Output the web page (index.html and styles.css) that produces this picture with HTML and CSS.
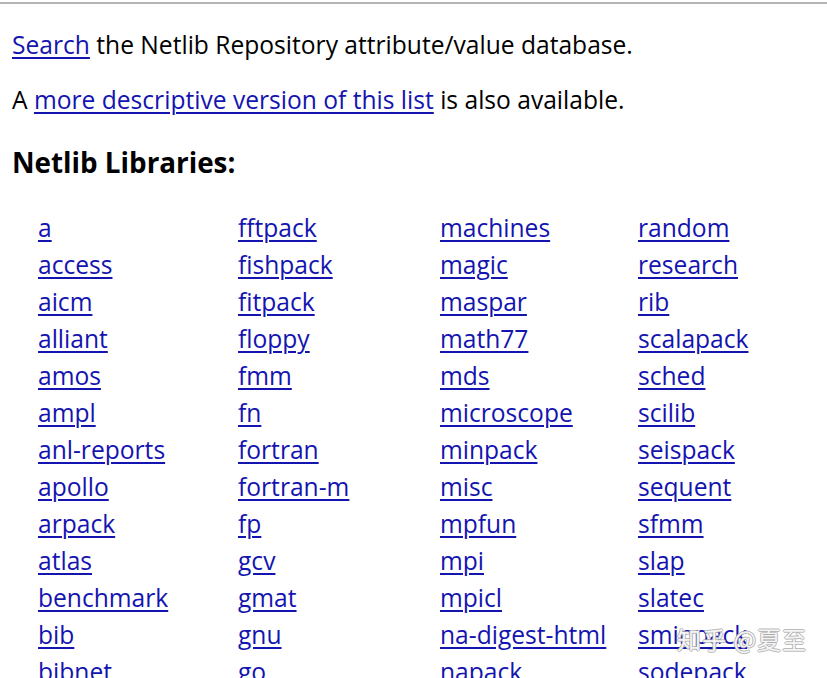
FILE: index.html
```html
<!DOCTYPE html>
<html>
<head>
<meta charset="utf-8">
<link rel="stylesheet" href="styles.css">
</head>
<body>
<div class="rule"></div>
<p class="line first"><a href="#">Search</a> the Netlib Repository attribute/value database.</p>
<p class="line second">A <a href="#">more descriptive version of this list</a> is also available.</p>
<h3 class="title">Netlib Libraries:</h3>
<div class="libs">
<a href="#">a</a><a href="#">fftpack</a><a href="#">machines</a><a href="#">random</a>
<a href="#">access</a><a href="#">fishpack</a><a href="#">magic</a><a href="#">research</a>
<a href="#">aicm</a><a href="#">fitpack</a><a href="#">maspar</a><a href="#">rib</a>
<a href="#">alliant</a><a href="#">floppy</a><a href="#">math77</a><a href="#">scalapack</a>
<a href="#">amos</a><a href="#">fmm</a><a href="#">mds</a><a href="#">sched</a>
<a href="#">ampl</a><a href="#">fn</a><a href="#">microscope</a><a href="#">scilib</a>
<a href="#">anl-reports</a><a href="#">fortran</a><a href="#">minpack</a><a href="#">seispack</a>
<a href="#">apollo</a><a href="#">fortran-m</a><a href="#">misc</a><a href="#">sequent</a>
<a href="#">arpack</a><a href="#">fp</a><a href="#">mpfun</a><a href="#">sfmm</a>
<a href="#">atlas</a><a href="#">gcv</a><a href="#">mpi</a><a href="#">slap</a>
<a href="#">benchmark</a><a href="#">gmat</a><a href="#">mpicl</a><a href="#">slatec</a>
<a href="#">bib</a><a href="#">gnu</a><a href="#">na-digest-html</a><a href="#">sminpack</a>
<a href="#">bibnet</a><a href="#">go</a><a href="#">napack</a><a href="#">sodepack</a>
</div>
<div class="watermark">知乎 @夏至</div>
</body>
</html>
```
FILE: styles.css
```css
html, body {
  margin: 0;
  padding: 0;
  background: #ffffff;
  overflow: hidden;
}
body {
  padding: 0 12px;
  font-family: "Open Sans", "Noto Sans", sans-serif;
  font-size: 24.6px;
  color: #000;
  position: relative;
  height: 678px;
}
a {
  color: #1414b0;
  text-decoration: underline;
  text-decoration-thickness: 2px;
  text-underline-offset: 3px;
}
.rule {
  margin: 2px -12px 0;
  border-top: 2px solid #b4b4b4;
}
.line {
  margin: 0;
  line-height: 36px;
}
.first { margin-top: 23px; }
.second { margin-top: 19px; }
.title {
  margin: 24px 0 0;
  font-size: 27.8px;
  font-weight: bold;
  line-height: 40px;
}
.libs {
  margin-top: 27px;
  padding-left: 26px;
  display: grid;
  grid-template-columns: 200px 202px 198px 180px;
  grid-auto-rows: 37px;
  align-items: center;
}
.libs a {
  justify-self: start;
  line-height: 37px;
}
.watermark {
  position: absolute;
  left: 677px;
  top: 621px;
  font-family: "Noto Sans CJK SC", sans-serif;
  font-size: 24px;
  color: rgba(255, 255, 255, 0.9);
  text-shadow: 1px 0 0 rgba(170, 170, 170, 0.8), -1px 0 0 rgba(170, 170, 170, 0.8), 0 1px 0 rgba(170, 170, 170, 0.8), 0 -1px 0 rgba(170, 170, 170, 0.8);
  letter-spacing: 1px;
}
```
